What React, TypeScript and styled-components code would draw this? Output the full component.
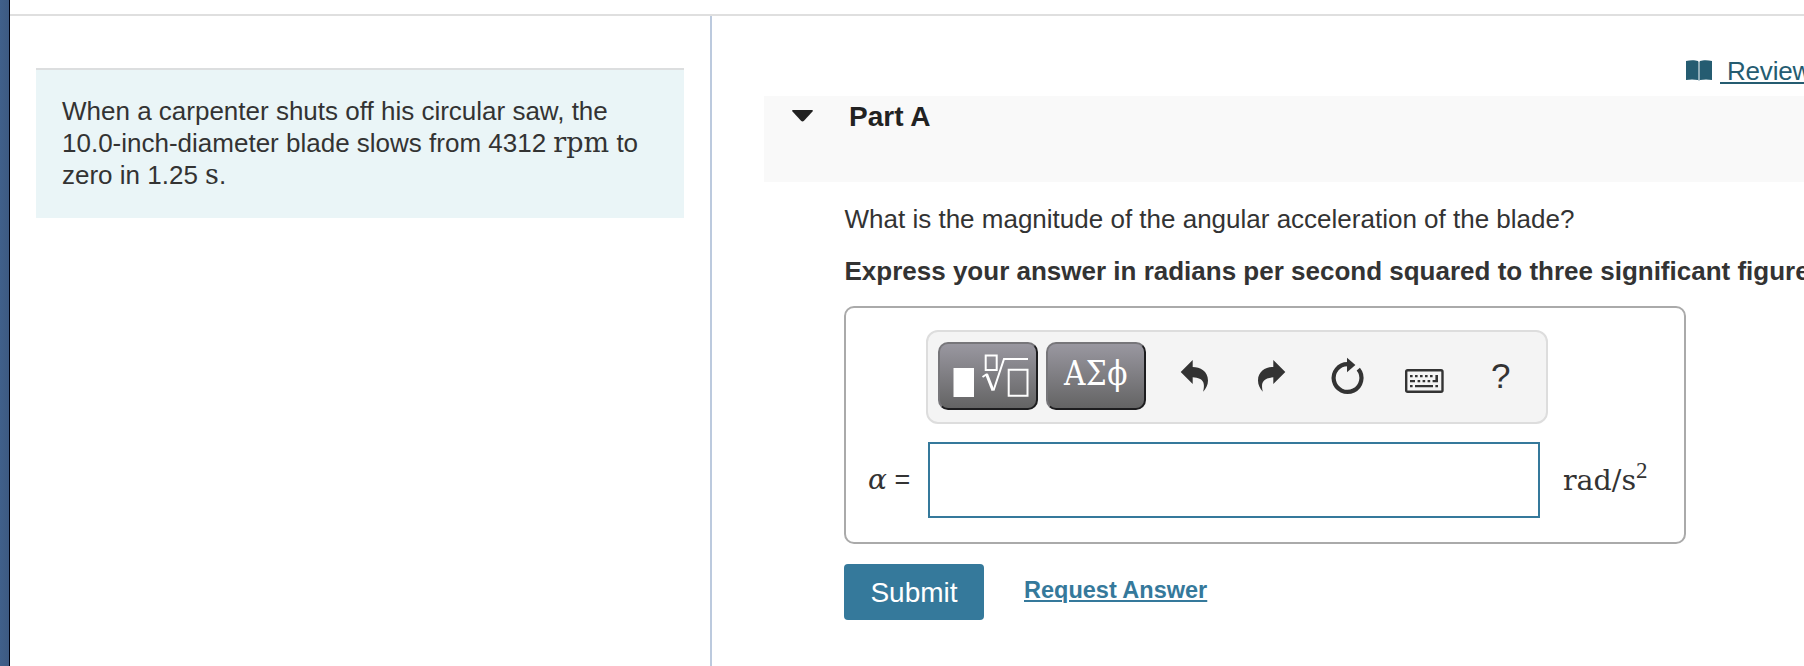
import React from 'react';
import styled, { createGlobalStyle } from 'styled-components';

const sans = '"Liberation Sans", Arial, sans-serif';
const serif = '"Liberation Serif", "Times New Roman", serif';
const slab = '"DejaVu Serif", serif';

const GlobalStyle = createGlobalStyle`
  * { box-sizing: border-box; }
  body {
    margin: 0;
    overflow: hidden;
    background: #fff;
    color: #333;
    font-family: ${sans};
    font-size: 26px;
  }
`;

const Page = styled.div`
  display: flex;
  height: 666px;
  overflow: hidden;
`;

const WindowEdge = styled.div`
  flex: none;
  width: 10px;
  background: linear-gradient(90deg, #40608b, #3d5a82);
  border-right: 1px solid #000414;
`;

const Main = styled.div`
  flex: 1;
  min-width: 0;
  margin-top: 14px;
  border-top: 2px solid #dfdfdf;
  display: flex;
`;

const ProblemPane = styled.aside`
  flex: none;
  width: 702px;
  padding: 52px 26px 0;
  border-right: 2px solid #bccade;
`;

const ProblemCard = styled.div`
  height: 150px;
  padding: 25px 26px 0;
  background: #eaf5f7;
  border-top: 2px solid #dcdedf;
  line-height: 32px;
  white-space: nowrap;
`;

const MathText = styled.span`
  font-family: ${slab};
  font-size: 27px;
  line-height: 1px;
`;

const AnswerPane = styled.main`
  flex: 1;
  min-width: 0;
  padding-left: 52px;
  overflow: hidden;
  white-space: nowrap;
`;

const ReviewRow = styled.div`
  height: 80px;
  padding: 38px 0 0 922px;
  display: flex;
  align-items: flex-start;
`;

const BookIcon = styled.svg`
  flex: none;
  width: 26px;
  height: 22px;
  margin: 6px 8px 0 0;
`;

const ReviewLink = styled.a`
  color: #255c71;
  line-height: 34px;
  letter-spacing: -0.2px;
  white-space: pre;
  text-decoration: underline;
  text-decoration-thickness: 2px;
  text-underline-offset: 2px;
  text-decoration-skip-ink: none;
`;

const PartHeader = styled.header`
  height: 86px;
  padding: 4px 0 0 28px;
  display: flex;
  align-items: flex-start;
  background: #f9f9f9;
`;

const Caret = styled.svg`
  width: 21px;
  height: 12px;
  margin: 10px 36px 0 0;
`;

const PartTitle = styled.h2`
  margin: 1px 0 0;
  font-size: 28px;
  line-height: 32px;
  color: #222;
`;

const PartBody = styled.section`
  padding: 21px 0 0 80px;
`;

const Question = styled.p<{ $bold?: boolean }>`
  margin: 0 0 ${(p) => (p.$bold ? 19 : 20)}px;
  line-height: 32px;
  text-indent: 0.5px;
  font-weight: ${(p) => (p.$bold ? 700 : 400)};
`;

const AnswerBox = styled.div`
  width: 842px;
  height: 238px;
  padding: 22px 0 0 22px;
  border: 2px solid #aaa;
  border-radius: 10px;
`;

const Toolbar = styled.div`
  width: 622px;
  height: 94px;
  margin-left: 58px;
  padding: 10px;
  display: flex;
  background: #f4f4f4;
  border: 2px solid #ddd;
  border-radius: 12px;
`;

const PaletteButton = styled.button`
  flex: none;
  width: 100px;
  height: 68px;
  margin: 0 8px 0 0;
  padding: 0;
  display: flex;
  align-items: center;
  justify-content: center;
  border: 2px solid;
  border-color: #77767a #1d1d1f #1d1d1f #77767a;
  border-radius: 10px;
  background: linear-gradient(#9b99a2, #626262) border-box;
  color: #fff;
  font: 33px/64px "DejaVu Serif Condensed", ${slab};
`;

const GreekLabel = styled.span`
  margin-top: -4px;
  letter-spacing: 0.5px;
`;

const ToolButton = styled.button`
  width: 76.6px;
  height: 68px;
  padding: 0;
  border: 0;
  background: none;
  color: #333;
  font: 35px/68px ${sans};
`;

const ToolIcon = styled.svg`
  display: block;
  width: 76.6px;
  height: 68px;
`;

const Tools = styled.div`
  display: flex;
  margin-left: 2px;
`;

const InputRow = styled.div`
  display: flex;
  align-items: center;
  height: 76px;
  margin-top: 18px;
`;

const VariableLabel = styled.label`
  width: 60px;
  font-size: 27px;
  line-height: 32px;
`;

const Alpha = styled.i`
  font: italic 28px/1 ${slab};
`;

const AnswerInput = styled.input`
  width: 612px;
  height: 76px;
  border: 2px solid #35799b;
  padding: 0 12px;
  font: inherit;
  outline: 0;
`;

const Unit = styled.span`
  margin: 2px 0 0 23px;
  font: 28.5px/40px ${slab};
`;

const Exponent = styled.sup`
  font: 23px/0 ${serif};
  vertical-align: 12px;
`;

const Actions = styled.div`
  display: flex;
  margin-top: 20px;
`;

const SubmitButton = styled.button`
  width: 140px;
  height: 56px;
  margin-right: 40px;
  padding: 0;
  border: 0;
  border-radius: 4px;
  background: #35799b;
  color: #fff;
  font: 28px/58px ${sans};
`;

const RequestLink = styled.a`
  color: #35799b;
  font-size: 23.5px;
  font-weight: 700;
  line-height: 52px;
  text-decoration: underline;
  text-decoration-thickness: 2px;
  text-underline-offset: 2px;
`;

const arrowPath =
  'M24.7 30 36.7 18V25C44 25 52 29 52 38.5C52 43 50 46.5 47.2 49.8C49 42 48.5 36 36.7 35.3V42Z';

export default function App() {
  return (
    <>
      <GlobalStyle />
      <Page>
        <WindowEdge />
        <Main>
          <ProblemPane>
            <ProblemCard>
              When a carpenter shuts off his circular saw, the
              <br />
              10.0-inch-diameter blade slows from 4312 <MathText>rpm</MathText> to
              <br />
              zero in 1.25 <MathText>s</MathText>.
            </ProblemCard>
          </ProblemPane>
          <AnswerPane>
            <ReviewRow>
              <BookIcon viewBox="0 0 26 22">
                <path fill="#255c71" d="M0 1C4 0 9 0 12 1V20C8 19.2 4 19.2 0 20ZM14 1C17 0 22 0 26 1V20C22 19.2 18 19.2 14 20Z" />
                <path fill="#8facb7" d="M12 1.5h2v19h-2z" />
              </BookIcon>
              <ReviewLink> Review</ReviewLink>
            </ReviewRow>
            <PartHeader>
              <Caret viewBox="0 0 21 12">
                <path fill="#222" d="M1 0H20Q21.5 .5 20.5 1.6L12 10.8Q10.5 12.4 9 10.8L.5 1.6Q-.5 .5 1 0Z" />
              </Caret>
              <PartTitle>Part A</PartTitle>
            </PartHeader>
            <PartBody>
              <Question>What is the magnitude of the angular acceleration of the blade?</Question>
              <Question $bold>Express your answer in radians per second squared to three significant figures.</Question>
              <AnswerBox>
                <Toolbar>
                  <PaletteButton aria-label="Templates">
                    <svg width="96" height="64" viewBox="2 2 96 64" fill="none" stroke="#fff">
                      <path fill="#fff" stroke="none" d="M15.5 26h20.5v29h-20.5z" />
                      <path strokeWidth="2" d="M47.7 13.5h11v14.6h-11zM70.7 27.8h18.8v26h-18.8z" />
                      <path strokeWidth="2" d="M55.5 48.5 66 17H90M44.5 35 49 32" />
                      <path strokeWidth="3" d="M48.5 32 55 48.5" />
                    </svg>
                  </PaletteButton>
                  <PaletteButton aria-label="Greek symbols">
                    <GreekLabel>ΑΣϕ</GreekLabel>
                  </PaletteButton>
                  <Tools>
                    <ToolButton aria-label="Undo">
                      <ToolIcon viewBox="0 0 76.6 68">
                        <path fill="#333" d={arrowPath} />
                      </ToolIcon>
                    </ToolButton>
                    <ToolButton aria-label="Redo">
                      <ToolIcon viewBox="0 0 76.6 68">
                        <path fill="#333" transform="translate(77 0) scale(-1 1)" d={arrowPath} />
                      </ToolIcon>
                    </ToolButton>
                    <ToolButton aria-label="Reset">
                      <ToolIcon viewBox="0 0 76.6 68">
                        <path fill="none" stroke="#333" strokeWidth="4.2" d="M38.7 22.1A13.9 13.9 0 1 0 49.3 27.2" />
                        <path fill="#333" d="M38 15.8 46.4 23 38 30.2Z" />
                      </ToolIcon>
                    </ToolButton>
                    <ToolButton aria-label="Keyboard shortcuts">
                      <ToolIcon viewBox="0 0 76.6 68">
                        <rect x="20.2" y="28.3" width="36.3" height="21.4" rx="1.5" fill="none" stroke="#333" strokeWidth="2.4" />
                        <path
                          fill="#333"
                          d="M24 33h2.6v2.2H24zM29 33h2.6v2.2H29zM34 33h2.6v2.2H34zM39 33h2.6v2.2H39zM44 33h2.6v2.2H44zM49.4 33H52v7.2h-5.4V38h2.8zM24 38h5v2.2h-5zM31.6 38h2.6v2.2h-2.6zM36.6 38h2.6v2.2h-2.6zM41.6 38h2.6v2.2h-2.6zM24 43h2.6v2.2H24zM29 43h18v2.2H29zM49.4 43H52v2.2h-2.6z"
                        />
                      </ToolIcon>
                    </ToolButton>
                    <ToolButton aria-label="Help">?</ToolButton>
                  </Tools>
                </Toolbar>
                <InputRow>
                  <VariableLabel htmlFor="answer">
                    <Alpha>α</Alpha> =
                  </VariableLabel>
                  <AnswerInput id="answer" />
                  <Unit>
                    rad/s<Exponent>2</Exponent>
                  </Unit>
                </InputRow>
              </AnswerBox>
              <Actions>
                <SubmitButton>Submit</SubmitButton>
                <RequestLink>Request Answer</RequestLink>
              </Actions>
            </PartBody>
          </AnswerPane>
        </Main>
      </Page>
    </>
  );
}
